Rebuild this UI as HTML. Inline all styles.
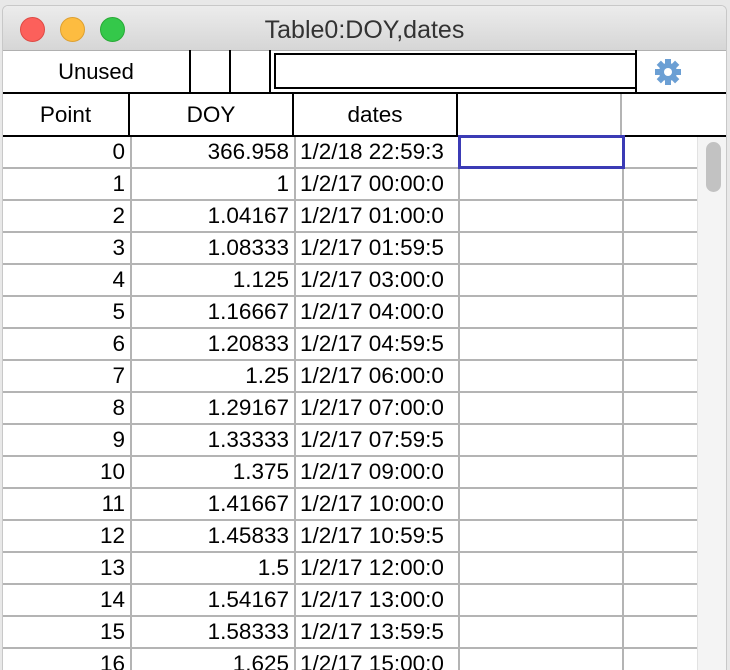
<!DOCTYPE html>
<html><head><style>
body{margin:0;width:730px;height:670px;overflow:hidden;background:#e8e8e8;font-family:"Liberation Sans",Arial,sans-serif;position:relative}
.win{position:absolute;left:2px;top:5px;width:725px;height:665px;background:#fff;border-radius:6px 6px 0 0;overflow:hidden;border:1px solid #c8c8c8;border-bottom:none;box-sizing:border-box}
.title{position:absolute;left:0;top:0;width:100%;height:44px;background:linear-gradient(#ececec,#d6d6d6);border-bottom:1px solid #b0b0b0;text-align:center;font-size:25px;line-height:48px;color:#333}
.dot{position:absolute;top:11px;width:23px;height:23px;border-radius:50%}
.tb{position:absolute;top:44px;height:44px;border:2px solid #000;border-top:none;box-sizing:border-box;font-size:22px;text-align:center;line-height:44px}
table{position:absolute;left:0;top:129px;border-collapse:collapse;table-layout:fixed;font-size:22.5px}
td{height:30px;border:2px solid #b4b4b4;border-top:none;padding:0 5px 0 4px;text-align:right;overflow:hidden;white-space:nowrap;line-height:30px}
td:first-child{border-left:none}
.sb{position:absolute;left:694px;top:131px;width:31px;height:540px;background:#f4f4f4;border-left:1px solid #e2e2e2}
</style></head><body>
<div class="win">
<div class="title">Table0:DOY,dates
<div class="dot" style="left:17px;background:#fc605b;border:1px solid #de4a44"></div>
<div class="dot" style="left:57px;background:#fdbc40;border:1px solid #dea030"></div>
<div class="dot" style="left:97px;background:#34c84a;border:1px solid #27aa35"></div>
</div>
<div class="tb" style="left:0;width:188px;border-left:none">Unused</div>
<div class="tb" style="left:186px;width:42px"></div>
<div class="tb" style="left:226px;width:42px"></div>
<div class="tb" style="left:266px;width:368px;border-right:none"><div style="position:absolute;left:3px;top:3px;right:0;bottom:3px;border:2px solid #000"></div></div>
<div class="tb" style="left:632px;width:95px;border-right:none">
<svg width="30" height="30" viewBox="0 0 30 30" style="position:absolute;left:16px;top:7px"><g fill="#6b9fd4"><circle cx="15" cy="15" r="9"/><rect x="12" y="2" width="6" height="26"/><rect x="12" y="2" width="6" height="26" transform="rotate(45 15 15)"/><rect x="12" y="2" width="6" height="26" transform="rotate(90 15 15)"/><rect x="12" y="2" width="6" height="26" transform="rotate(135 15 15)"/></g><circle cx="15" cy="15" r="4" fill="#fff"/></svg>
</div>
<div style="position:absolute;left:0;top:88px;width:725px;height:43px;border-bottom:2px solid #000;box-sizing:border-box;font-size:22.5px;line-height:42px">
<div style="position:absolute;left:0;width:125px;text-align:center;border-right:2px solid #000;height:41px">Point</div>
<div style="position:absolute;left:127px;width:162px;text-align:center;border-right:2px solid #000;height:41px">DOY</div>
<div style="position:absolute;left:291px;width:162px;text-align:center;border-right:2px solid #000;height:41px">dates</div>
<div style="position:absolute;left:455px;width:162px;border-right:2px solid #b4b4b4;height:41px"></div>
</div>
<table>
<colgroup><col style="width:128px"><col style="width:164px"><col style="width:164px"><col style="width:164px"><col style="width:75px"></colgroup>
<tr><td>0</td><td>366.958</td><td style="text-align:left">1/2/18 22:59:3</td><td style="border:3px solid #3b3bb5;height:27px"></td><td></td></tr>
<tr><td>1</td><td>1</td><td style="text-align:left">1/2/17 00:00:0</td><td></td><td></td></tr>
<tr><td>2</td><td>1.04167</td><td style="text-align:left">1/2/17 01:00:0</td><td></td><td></td></tr>
<tr><td>3</td><td>1.08333</td><td style="text-align:left">1/2/17 01:59:5</td><td></td><td></td></tr>
<tr><td>4</td><td>1.125</td><td style="text-align:left">1/2/17 03:00:0</td><td></td><td></td></tr>
<tr><td>5</td><td>1.16667</td><td style="text-align:left">1/2/17 04:00:0</td><td></td><td></td></tr>
<tr><td>6</td><td>1.20833</td><td style="text-align:left">1/2/17 04:59:5</td><td></td><td></td></tr>
<tr><td>7</td><td>1.25</td><td style="text-align:left">1/2/17 06:00:0</td><td></td><td></td></tr>
<tr><td>8</td><td>1.29167</td><td style="text-align:left">1/2/17 07:00:0</td><td></td><td></td></tr>
<tr><td>9</td><td>1.33333</td><td style="text-align:left">1/2/17 07:59:5</td><td></td><td></td></tr>
<tr><td>10</td><td>1.375</td><td style="text-align:left">1/2/17 09:00:0</td><td></td><td></td></tr>
<tr><td>11</td><td>1.41667</td><td style="text-align:left">1/2/17 10:00:0</td><td></td><td></td></tr>
<tr><td>12</td><td>1.45833</td><td style="text-align:left">1/2/17 10:59:5</td><td></td><td></td></tr>
<tr><td>13</td><td>1.5</td><td style="text-align:left">1/2/17 12:00:0</td><td></td><td></td></tr>
<tr><td>14</td><td>1.54167</td><td style="text-align:left">1/2/17 13:00:0</td><td></td><td></td></tr>
<tr><td>15</td><td>1.58333</td><td style="text-align:left">1/2/17 13:59:5</td><td></td><td></td></tr>
<tr><td>16</td><td>1.625</td><td style="text-align:left">1/2/17 15:00:0</td><td></td><td></td></tr>
</table>
<div class="sb"><div style="position:absolute;left:8px;top:5px;width:15px;height:50px;border-radius:8px;background:#c2c2c2"></div></div>
</div>
</body></html>
